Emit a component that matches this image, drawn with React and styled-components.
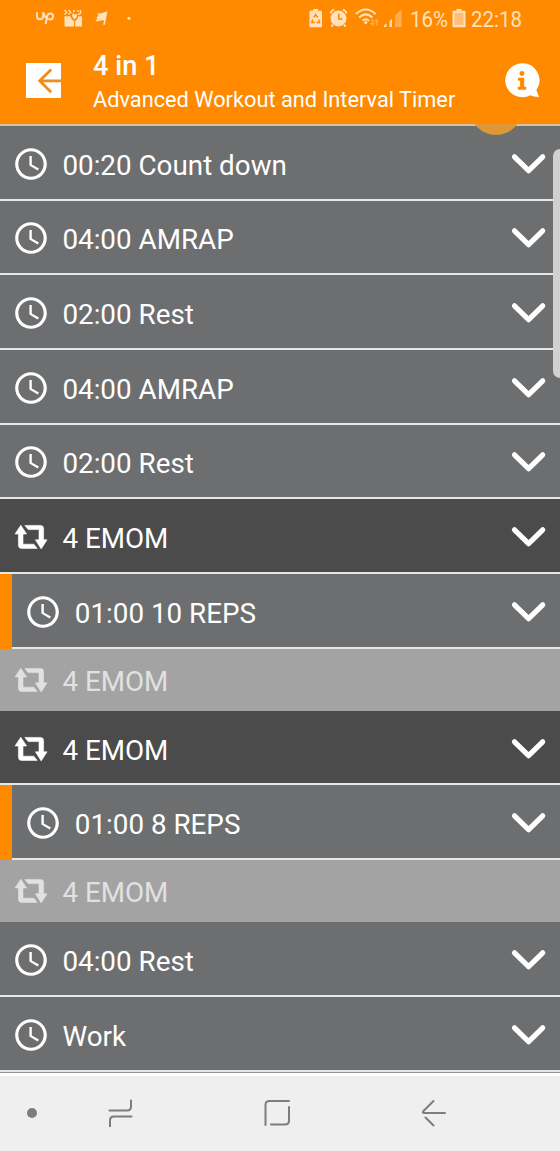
import React from 'react'
import styled, { createGlobalStyle } from 'styled-components'
import { MdAccessTime } from 'react-icons/md'

const colors = {
  orange: '#ff8a00',
  status: '#ffe1bd',
  row: '#6d6e70',
  rowDark: '#4b4b4b',
  rowEnd: '#a3a3a3',
  line: '#e6e7e8',
  nav: '#efefef',
  navIcon: '#7d7d7d',
}

const GlobalStyle = createGlobalStyle`
  * { box-sizing: border-box; }

  body {
    margin: 0;
    background: ${colors.nav};
    font-family: Roboto, "Liberation Sans", sans-serif;
  }
`

const Screen = styled.div`
  width: 560px;
  height: 1151px;
  overflow: hidden;
  display: flex;
  flex-direction: column;
`

const StatusBar = styled.div`
  height: 38px;
  padding: 0 38px 0 35px;
  display: flex;
  align-items: center;
  justify-content: space-between;
  background: ${colors.orange};
  color: ${colors.status};

  svg {
    display: block;
    flex-shrink: 0;
  }
`

const StatusGroup = styled.div`
  display: flex;
  align-items: center;
`

// the system font is narrower than Roboto, so the glyphs are squeezed a little
const StatusText = styled.span`
  width: ${props => props.$width}px;
  margin-left: ${props => props.$before || 0}px;
  font-size: 22.5px;
  line-height: 38px;
  white-space: nowrap;
  transform: scaleX(0.91);
  transform-origin: left center;
`

const Header = styled.header`
  height: 88px;
  padding: 12px 20px 0 26px;
  display: flex;
  align-items: flex-start;
  background: ${colors.orange};
  border-bottom: 2px solid #d9c3a0;
  color: #fff;
`

const BackButton = styled.button`
  width: 35px;
  height: 35px;
  margin: 13px 32px 0 0;
  padding: 0;
  border: 0;
  background: #fff;

  svg { display: block; }
`

const Titles = styled.div`
  flex: 1;
`

const Title = styled.h1`
  margin: 0;
  font-size: 27.2px;
  font-weight: 500;
  line-height: 32px;
`

const Subtitle = styled.p`
  margin: 2px 0 0;
  font-size: 21.75px;
  line-height: 32px;
  white-space: nowrap;
`

const InfoIcon = styled.svg`
  margin-top: 13px;
`

const List = styled.main`
  position: relative;
  height: 946px;
  background: ${colors.row};
`

const Row = styled.div`
  height: ${props => (props.$end ? 62.2 : 74.67)}px;
  display: flex;
`

const Stripe = styled.span`
  width: 12.4px;
  background: ${colors.orange};
`

const RowBody = styled.div`
  flex: 1;
  padding: ${props => (props.$end ? 0 : 3)}px 12px 0 12px;
  display: flex;
  align-items: center;
  background: ${props => (props.$end ? colors.rowEnd : props.$group ? colors.rowDark : colors.row)};
  border-bottom: ${props => (props.$end ? 0 : 2)}px solid ${colors.line};
  color: ${props => (props.$end ? '#e1e1e1' : '#fff')};
`

const RowIcon = styled.span`
  width: 38px;
  height: 38px;
  display: flex;
  align-items: center;
  justify-content: center;
`

const Label = styled.span`
  flex: 1;
  margin-left: 12.4px;
  padding-top: 4px;
  font-size: 27.8px;
  line-height: 34px;
  white-space: nowrap;
`

// floating button that peeks out under the header
const FabEdge = styled.div`
  position: absolute;
  top: -2px;
  left: 470px;
  width: 52px;
  height: 11px;
  overflow: hidden;

  &::after {
    content: '';
    position: absolute;
    bottom: 0;
    left: 0;
    width: 52px;
    height: 52px;
    border-radius: 50%;
    background: #dd9734;
  }
`

const ScrollThumb = styled.div`
  position: absolute;
  top: 23px;
  right: -8px;
  width: 15px;
  height: 229px;
  border-radius: 7px;
  background: #d0d0d0;
`

const BottomEdge = styled.div`
  height: 4px;
  background: #fff;
  border-top: 1px solid #929294;
`

const NavBar = styled.nav`
  flex: 1;
  padding: 0 113px 1px 27px;
  display: flex;
  align-items: center;
  background: ${colors.nav};
`

const NavDot = styled.span`
  width: 10px;
  height: 10px;
  border-radius: 50%;
  background: ${colors.navIcon};
`

const NavIcon = styled.svg`
  margin-left: ${props => props.$gap}px;
  fill: none;
  stroke: ${colors.navIcon};
  stroke-width: 2;
  stroke-linecap: round;
`

const rows = [
  { label: '00:20 Count down' },
  { label: '04:00 AMRAP' },
  { label: '02:00 Rest' },
  { label: '04:00 AMRAP' },
  { label: '02:00 Rest' },
  { label: '4 EMOM', type: 'group' },
  { label: '01:00 10 REPS', type: 'child' },
  { label: '4 EMOM', type: 'end' },
  { label: '4 EMOM', type: 'group' },
  { label: '01:00 8 REPS', type: 'child' },
  { label: '4 EMOM', type: 'end' },
  { label: '04:00 Rest' },
  { label: 'Work' },
]

function RepeatIcon() {
  return (
    <svg width="34" height="26" viewBox="0 0 34 26" fill="currentColor" stroke="currentColor" strokeWidth=".6" strokeLinejoin="round">
      <path d="M6.8 1.2 12.6 10H9v10.200H19.800l3.400 4.200H7.500Q4.400 24.400 4.400 21.300V10H1Z" />
      <path d="M27.200 25 21.400 15.800h3.600V5.600H14.200L10.800 1.400h15.600q3.200 0 3.200 3.100v11.300h3.500Z" />
    </svg>
  )
}

function Chevron() {
  return (
    <svg width="38" height="24" viewBox="0 0 38 24" fill="none" stroke="#fff" strokeWidth="5.2" strokeLinecap="round" strokeLinejoin="round">
      <path d="M4.500 4.800 18.600 18.700 32.700 4.800" />
    </svg>
  )
}

function NotificationIcons() {
  return (
    <svg width="100" height="38" viewBox="35 0 100 38" fill="none" stroke={colors.status}>
      {/* upwork */}
      <path d="M36.900 12.200v4q0 3.100 3.100 3.100t3.100-3.100v-4q1.300 4.500 4.100 6.300M45.600 24l1.400-7.300q.7-3.400 3.300-3.300 2.900.2 2.800 3-.2 3-3 3.100-2.200 0-3.800-2" strokeWidth="2" />
      {/* clapper board */}
      <path d="M64.500 10l2.200 2.200-2.200 2.200M68.500 10l2.200 2.200-2.200 2.200M73 11h2M77 11h2M80.500 10v4M73 14h1M78 14h2" strokeWidth="1.400" />
      <path d="M64.500 16.300h5.800q.8 3.500 3.800 5v5.200h-9.600ZM82 16.300h-3.600q-.7 3.500-3.200 5v5.200H82ZM72 14.500q1.500-1.200 2.700.2 1.500-1.200 2.600.1 0 2.500-2.700 4.600-2.700-2-2.600-4.900Z" fill={colors.status} stroke="none" />
      {/* flag */}
      <path d="M97.300 12.700q2.700 1.500 5 .4t5.100-1.500l-2.500 13.200h-1.700l.9-4.300q-1.800-.6-4 .2t-4.800.2l2.200-2.500-1.200-.8 2-1.500Z" fill={colors.status} stroke="none" />
      <circle cx="129" cy="18.300" r="1.600" fill={colors.status} stroke="none" />
    </svg>
  )
}

function SystemIcons() {
  return (
    <svg width="104" height="38" viewBox="306 0 104 38" fill={colors.status}>
      {/* battery saver */}
      <path d="M313 9h5v1.800h3q1 0 1 1v14.400q0 1-1 1h-10.600q-1 0-1-1V11.800q0-1 1-1H313Z" />
      <path d="M313.700 17.500l2-3 2 3M318.600 19.500l1 3h-3M312.800 19.500l-1 3h3" fill="none" stroke={colors.orange} strokeWidth="1.400" />
      {/* alarm */}
      <circle cx="338.500" cy="18.500" r="7.900" />
      <path d="M330.500 13.500q.5-3 3.700-4M346.500 13.500q-.5-3-3.700-4M333 24.500l-1.500 2.200M344 24.500l1.500 2.200" fill="none" stroke={colors.status} strokeWidth="1.800" />
      <path d="M338.800 13.800v5.200h3.800" fill="none" stroke={colors.orange} strokeWidth="1.600" />
      {/* wifi */}
      <g fill="none" stroke={colors.status} strokeWidth="2">
        <path d="M356 14q9.700-9 19.600 0M359.200 17.500q6.600-6.200 13.200 0M362.600 20.800q3.300-3 6.500 0" />
      </g>
      <circle cx="365.800" cy="22.600" r="1.500" />
      <path d="M372.500 26l-2.600-3h1.700v-4h1.800v4h1.700ZM376.700 18.500l2.600 3h-1.700v4h-1.800v-4h-1.700Z" opacity=".38" />
      {/* signal */}
      <path d="M384 27v-1.500l2.500-2.200V27ZM389.500 27v-6l2.500-2.200V27Z" />
      <path d="M395 27V15.500l6.700-6.300V27Z" opacity=".4" />
    </svg>
  )
}

function BatteryIcon() {
  return (
    <svg width="14" height="38" viewBox="452 0 14 38">
      <path d="M456.500 9h5v1.800h3q1 0 1 1v14.400q0 1-1 1h-11q-1 0-1-1V11.800q0-1 1-1h3Z" fill={colors.status} />
      <path d="M454.500 13h9v12h-9Z" fill="#ffbd75" />
    </svg>
  )
}

function App() {
  return (
    <Screen>
      <GlobalStyle />
      <StatusBar>
        <NotificationIcons />
        <StatusGroup>
          <SystemIcons />
          <StatusText $width={42}>16%</StatusText>
          <BatteryIcon />
          <StatusText $width={51} $before={5}>22:18</StatusText>
        </StatusGroup>
      </StatusBar>

      <Header>
        <BackButton aria-label="Back">
          <svg width="35" height="35" viewBox="0 0 35 35" fill="none" stroke="#f28c18" strokeWidth="2.8">
            <path d="M35 17.800H13.500M25.200 6.500 13.700 17.800 25.200 29.200" />
          </svg>
        </BackButton>
        <Titles>
          <Title>4 in 1</Title>
          <Subtitle>Advanced Workout and Interval Timer</Subtitle>
        </Titles>
        <InfoIcon width="35" height="35" viewBox="0 0 35 35">
          <path d="M17.300.3a17 17 0 1 0 8 32q3.400 1.700 8.700 1.600l-2.600-6.900A17 17 0 0 0 17.300.3Z" fill="#fff" />
          <circle cx="17" cy="10.500" r="2.400" fill={colors.orange} />
          <path d="M13 14.800h6.200v8.900h2v3h-8.400v-3h2.300v-5.900H13Z" fill={colors.orange} />
        </InfoIcon>
      </Header>

      <List>
        {rows.map((row, index) => {
          const isGroup = row.type === 'group'
          const isEnd = row.type === 'end'
          return (
            <Row key={index} $end={isEnd}>
              {row.type === 'child' && <Stripe />}
              <RowBody $group={isGroup} $end={isEnd}>
                <RowIcon>{isGroup || isEnd ? <RepeatIcon /> : <MdAccessTime size={38} />}</RowIcon>
                <Label>{row.label}</Label>
                {!isEnd && <Chevron />}
              </RowBody>
            </Row>
          )
        })}
        <FabEdge />
        <ScrollThumb />
      </List>

      <BottomEdge />
      <NavBar>
        <NavDot />
        <NavIcon $gap={70} width="27" height="28" viewBox="0 0 27 28">
          <path d="M2.500 11.500H20q4 0 4-4V1.500M24.500 17.500H7q-4 0-4 4v6" />
        </NavIcon>
        <NavIcon $gap={129} width="28" height="28" viewBox="0 0 28 28">
          <path d="M2.500 26V6q0-4 4-4H26M8 25.500h14q4 0 4-4V8" />
        </NavIcon>
        <NavIcon $gap={130} width="26" height="28" viewBox="0 0 26 28">
          <path d="M12.500 2 2.500 12q-1.500 2 .5 2H24M4.500 18.500 12.500 26.500" />
        </NavIcon>
      </NavBar>
    </Screen>
  )
}

export default App
